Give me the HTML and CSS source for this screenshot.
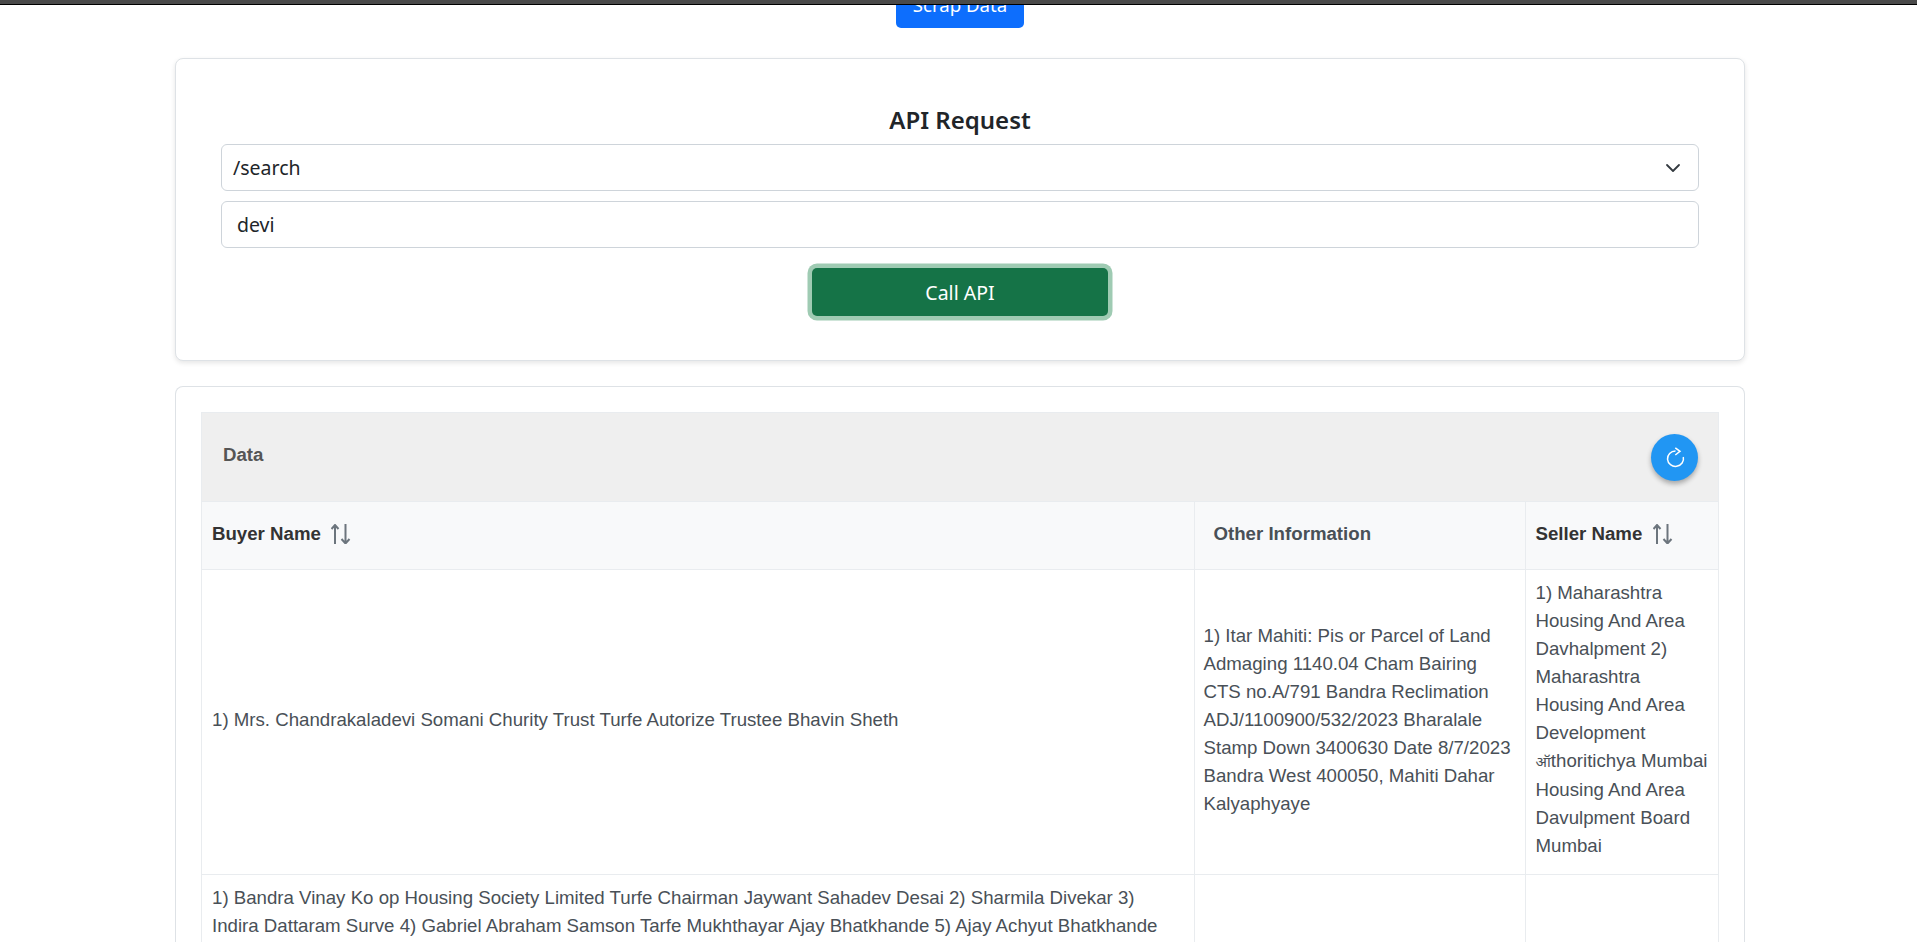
FILE: index.html
```html
<!DOCTYPE html>
<html lang="en">
<head>
<meta charset="utf-8">
<title>API Request</title>
<link rel="stylesheet" href="styles.css">
</head>
<body>
<div class="topbar"></div>
<main class="page">
  <div class="scrap-row"><button class="btn-scrap" type="button">Scrap Data</button></div>
  <section class="card card-request">
    <h3 class="card-title">API Request</h3>
    <div class="field select-field">
      <span>/search</span>
      <svg class="chevron" viewBox="0 0 16 16" aria-hidden="true"><path d="M2 5l6 6 6-6" fill="none" stroke="#343a40" stroke-width="1.8" stroke-linecap="round" stroke-linejoin="round"/></svg>
    </div>
    <div class="field input-field">devi</div>
    <div class="call-row"><button class="btn-call" type="button">Call API</button></div>
  </section>
  <section class="card card-data">
    <div class="data-table">
      <div class="data-head">
        <span class="data-title">Data</span>
        <button class="fab" type="button" aria-label="Refresh">
          <svg viewBox="0 0 24 24" aria-hidden="true"><path d="M12.500 6A8 7.700 0 1 0 20.300 12" fill="none" stroke="#fff" stroke-width="1.500"/><path d="M12.300 2.800L17 6.300 12.300 10" fill="none" stroke="#fff" stroke-width="1.500"/></svg>
        </button>
      </div>
      <table>
        <colgroup><col class="c1"><col class="c2"><col class="c3"></colgroup>
        <thead>
          <tr>
            <th>Buyer Name <svg class="sort" viewBox="0 0 20 20" aria-hidden="true"><path d="M4 20V1M.5 5L4 1l3.500 4" fill="none" stroke="#6c757d" stroke-width="2"/><path d="M14.500 0v19M10.500 15l4 4.500 4-4.500" fill="none" stroke="#6c757d" stroke-width="2"/></svg></th>
            <th class="muted"><span class="pad-other">Other Information</span></th>
            <th>Seller Name <svg class="sort" viewBox="0 0 20 20" aria-hidden="true"><path d="M4 20V1M.5 5L4 1l3.500 4" fill="none" stroke="#6c757d" stroke-width="2"/><path d="M14.500 0v19M10.500 15l4 4.500 4-4.500" fill="none" stroke="#6c757d" stroke-width="2"/></svg></th>
          </tr>
        </thead>
        <tbody>
          <tr>
            <td>1) Mrs. Chandrakaladevi Somani Churity Trust Turfe Autorize Trustee Bhavin Sheth</td>
            <td>1) Itar Mahiti: Pis or Parcel of Land Admaging 1140.04 Cham Bairing CTS no.A/791 Bandra Reclimation ADJ/1100900/532/2023 Bharalale Stamp Down 3400630 Date 8/7/2023 Bandra West 400050, Mahiti Dahar Kalyaphyaye</td>
            <td>1) Maharashtra Housing And Area Davhalpment 2) Maharashtra Housing And Area Development <span class="deva">ऑ</span>thoritichya Mumbai Housing And Area Davulpment Board Mumbai</td>
          </tr>
          <tr>
            <td>1) Bandra Vinay Ko op Housing Society Limited Turfe Chairman Jaywant Sahadev Desai 2) Sharmila Divekar 3) Indira Dattaram Surve 4) Gabriel Abraham Samson Tarfe Mukhthayar Ajay Bhatkhande 5) Ajay Achyut Bhatkhande</td>
            <td></td>
            <td></td>
          </tr>
        </tbody>
      </table>
    </div>
  </section>
</main>
</body>
</html>
```
FILE: styles.css
```css
* { box-sizing: border-box; }
html, body { margin: 0; height: 100%; overflow: hidden; background: #fff; }
body { display: flex; flex-direction: column; font-family: "Noto Sans", sans-serif; color: #212529; }
.topbar { flex: none; height: 5px; background: #4a4a4a; border-bottom: 1px solid #000; position: relative; z-index: 2; }
.page { flex: 1; min-height: 0; overflow: hidden; padding: 0 172px 0 175px; }
.scrap-row { display: flex; justify-content: center; margin-top: -25px; }
.btn-scrap { width: 128px; height: 48px; border: 0; border-radius: 5px; background: #0d6efd; color: #fff; font: 18.600px "Noto Sans", sans-serif; }
.card { background: #fff; border: 1px solid #dee2e6; border-radius: 8px; box-shadow: 0 2px 5px rgba(0,0,0,.1); }
.card-request { margin-top: 30px; height: 303px; padding: 45px 45px 0; }
.card-title { margin: 0 0 8px; font-size: 24px; line-height: 32px; font-weight: 600; text-align: center; }
.field { height: 47px; border: 1px solid #ced4da; border-radius: 6px; display: flex; align-items: center; font-size: 19.500px; background: #fff; }
.select-field { justify-content: space-between; padding: 0 17px 0 11px; margin-bottom: 10px; }
.input-field { padding: 0 15px; }
.chevron { width: 16px; height: 16px; }
.call-row { display: flex; justify-content: center; margin-top: 20px; }
.btn-call { width: 296px; height: 48px; border: 0; border-radius: 5px; background: #157347; color: #fff; font: 19.500px "Noto Sans", sans-serif; box-shadow: 0 0 0 4.500px #9fcbb3; }
.card-data { margin-top: 25px; padding: 25px 25px 0; height: 900px; border-bottom: 0; box-shadow: none; }
.data-table { border: 1px solid #e9ecef; border-bottom: 0; }
.data-head { height: 88px; background: #efefef; display: flex; align-items: center; justify-content: space-between; padding: 0 20px 0 21px; }
.data-title { font: bold 18.670px "Liberation Sans", sans-serif; color: #555; padding-bottom: 4px; }
.fab { width: 47px; height: 47px; padding: 0; border: 0; border-radius: 50%; background: #2196f3; box-shadow: 0 3px 5px rgba(0,0,0,.3); display: flex; align-items: center; justify-content: center; }
.fab svg { width: 24px; height: 24px; }
table { width: 100%; table-layout: fixed; border-collapse: collapse; font: 18.670px/28px "Liberation Sans", "Noto Sans", sans-serif; color: #495057; }
.c1 { width: 992px; }
.c2 { width: 331px; }
th, td { border: 1px solid #e9ecef; text-align: left; vertical-align: middle; }
tr > :first-child { border-left: 0; }
tr > :last-child { border-right: 0; }
th { height: 68px; padding: 0 10px 4px; background: #f8f9fa; color: #333; font-weight: 700; }
th.muted { color: #495057; }
.pad-other { padding-left: 9px; }
td { padding: 9px 8px 14px 10px; }
td:nth-child(2) { padding-left: 9px; }
.deva { font-size: 15px; }
.sort { width: 20px; height: 20px; margin-left: 5px; vertical-align: -4px; }
```
